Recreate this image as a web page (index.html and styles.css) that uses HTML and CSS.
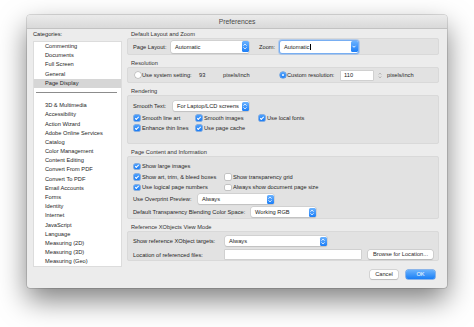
FILE: index.html
```html
<!DOCTYPE html>
<html>
<head>
<meta charset="utf-8">
<link rel="stylesheet" href="styles.css">
</head>
<body>
<div class="window">
  <div class="titlebar">Preferences</div>
  <div class="content">
    <div class="sidebar">
      <div class="cat-label">Categories:</div>
      <ul class="cat-list">
        <li>Commenting</li>
        <li>Documents</li>
        <li>Full Screen</li>
        <li>General</li>
        <li class="selected">Page Display</li>
        <li class="sep"></li>
        <li>3D &amp; Multimedia</li>
        <li>Accessibility</li>
        <li>Action Wizard</li>
        <li>Adobe Online Services</li>
        <li>Catalog</li>
        <li>Color Management</li>
        <li>Content Editing</li>
        <li>Convert From PDF</li>
        <li>Convert To PDF</li>
        <li>Email Accounts</li>
        <li>Forms</li>
        <li>Identity</li>
        <li>Internet</li>
        <li>JavaScript</li>
        <li>Language</li>
        <li>Measuring (2D)</li>
        <li>Measuring (3D)</li>
        <li>Measuring (Geo)</li>
        <li>Multimedia (legacy)</li>
      </ul>
    </div>
    <div class="main">
      <section class="sec">
        <div class="sec-title first">Default Layout and Zoom</div>
        <div class="group g1">
          <span class="lbl w-layout">Page Layout:</span>
          <div class="select w78"><span>Automatic</span><i class="step"><svg viewBox="0 0 6 9" width="6" height="9"><path d="M1.5 3.6 L3 2.1 L4.5 3.6 M1.5 5.4 L3 6.9 L4.5 5.4" fill="none" stroke="#fff" stroke-width="0.9"/></svg></i></div>
          <span class="lbl w-zoom">Zoom:</span>
          <div class="select focus w78"><span>Automatic<b class="caret"></b></span><i class="step"><svg viewBox="0 0 6 9" width="6" height="9"><path d="M1.5 3.8 L3 5.3 L4.5 3.8" fill="none" stroke="#fff" stroke-width="0.9"/></svg></i></div>
        </div>
      </section>
      <section class="sec">
        <div class="sec-title">Resolution</div>
        <div class="group g2">
          <span class="radio"></span>
          <span class="lbl w-sys">Use system setting:</span>
          <span class="lbl w-93">93</span>
          <span class="lbl w-ppi">pixels/inch</span>
          <span class="radio on"></span>
          <span class="lbl w-custom">Custom resolution:</span>
          <div class="field w32">110</div>
          <svg class="mini-step" viewBox="0 0 4 9" width="4" height="9"><path d="M0.8 3.4 L2 2.2 L3.2 3.4 M0.8 5.6 L2 6.8 L3.2 5.6" fill="none" stroke="#8a8a8a" stroke-width="0.6"/></svg>
          <span class="lbl">pixels/inch</span>
        </div>
      </section>
      <section class="sec">
        <div class="sec-title">Rendering</div>
        <div class="group g3">
          <div class="row">
            <span class="lbl w-smooth">Smooth Text:</span>
            <div class="select w76 h10"><span>For Laptop/LCD screens</span><i class="step"><svg viewBox="0 0 6 9" width="6" height="9"><path d="M1.5 3.6 L3 2.1 L4.5 3.6 M1.5 5.4 L3 6.9 L4.5 5.4" fill="none" stroke="#fff" stroke-width="0.9"/></svg></i></div>
          </div>
          <div class="checks c3">
            <label class="chk"><span class="box on"></span>Smooth line art</label>
            <label class="chk"><span class="box on"></span>Smooth images</label>
            <label class="chk"><span class="box on"></span>Use local fonts</label>
            <label class="chk"><span class="box on"></span>Enhance thin lines</label>
            <label class="chk"><span class="box on"></span>Use page cache</label>
          </div>
        </div>
      </section>
      <section class="sec">
        <div class="sec-title">Page Content and Information</div>
        <div class="group g4">
          <div class="checks c2">
            <label class="chk"><span class="box on"></span>Show large images</label>
            <span></span>
            <label class="chk"><span class="box on"></span>Show art, trim, &amp; bleed boxes</label>
            <label class="chk"><span class="box"></span>Show transparency grid</label>
            <label class="chk"><span class="box on"></span>Use logical page numbers</label>
            <label class="chk"><span class="box"></span>Always show document page size</label>
          </div>
          <div class="row r-over">
            <span class="lbl w-over">Use Overprint Preview:</span>
            <div class="select w76 h10"><span>Always</span><i class="step"><svg viewBox="0 0 6 9" width="6" height="9"><path d="M1.5 3.6 L3 2.1 L4.5 3.6 M1.5 5.4 L3 6.9 L4.5 5.4" fill="none" stroke="#fff" stroke-width="0.9"/></svg></i></div>
          </div>
          <div class="row r-blend">
            <span class="lbl w-blend">Default Transparency Blending Color Space:</span>
            <div class="select w65 h10"><span>Working RGB</span><i class="step"><svg viewBox="0 0 6 9" width="6" height="9"><path d="M1.5 3.6 L3 2.1 L4.5 3.6 M1.5 5.4 L3 6.9 L4.5 5.4" fill="none" stroke="#fff" stroke-width="0.9"/></svg></i></div>
          </div>
        </div>
      </section>
      <section class="sec">
        <div class="sec-title">Reference XObjects View Mode</div>
        <div class="group g5">
          <div class="row">
            <span class="lbl w-xref">Show reference XObject targets:</span>
            <div class="select w102 h10"><span>Always</span><i class="step"><svg viewBox="0 0 6 9" width="6" height="9"><path d="M1.5 3.6 L3 2.1 L4.5 3.6 M1.5 5.4 L3 6.9 L4.5 5.4" fill="none" stroke="#fff" stroke-width="0.9"/></svg></i></div>
          </div>
          <div class="row r-loc">
            <span class="lbl w-xref">Location of referenced files:</span>
            <div class="field w136"></div>
            <button class="btn browse">Browse for Location...</button>
          </div>
        </div>
      </section>
      <div class="actions">
        <button class="btn cancel">Cancel</button>
        <button class="btn ok">OK</button>
      </div>
    </div>
  </div>
</div>
</body>
</html>
```
FILE: styles.css
```css
* { box-sizing: border-box; }
html, body { margin: 0; padding: 0; background: #fff; }
body {
  font-family: "Liberation Sans", Arial, sans-serif;
  font-size: 5.7px;
  color: #262626;
  width: 474px;
  height: 327px;
  overflow: hidden;
}
.window {
  margin: 15px 0 0 27px;
  width: 420px;
  height: 273px;
  background: #ececec;
  border-radius: 3px;
  box-shadow: 0 12px 28px rgba(0,0,0,0.5), 0 0 0 0.5px rgba(0,0,0,0.25);
  display: flex;
  flex-direction: column;
  overflow: hidden;
}
.titlebar {
  height: 14px;
  flex: none;
  background: linear-gradient(#ebebeb, #d9d9d9);
  border-bottom: 1px solid #c2c2c2;
  text-align: center;
  line-height: 13px;
  font-size: 6.8px;
  color: #4a4a4a;
}
.content {
  flex: 1;
  display: flex;
  padding: 0 8px 0 6px;
  gap: 5px;
}
.sidebar { width: 89px; flex: none; display: flex; flex-direction: column; }
.cat-label { padding-top: 1px; line-height: 8px; height: 12px; }
.cat-list {
  list-style: none;
  margin: 0;
  padding: 0;
  background: #fff;
  height: 226px;
  overflow: hidden;
  border: 0.5px solid #dcdcdc;
}
.cat-list li {
  height: 9.2px;
  line-height: 9.2px;
  padding-left: 11px;
  white-space: nowrap;
}
.cat-list li.selected { background: #d6d6d6; }
.cat-list li.sep::after {
  content: "";
  display: block;
  margin: 4px 4px 0 -9px;
  height: 1px;
  background: #8c8c8c;
}
.main { flex: 1; display: flex; flex-direction: column; }
.sec-title { padding-top: 5px; line-height: 7px; height: 12px; color: #333; padding-left: 4px; }
.sec-title.first { padding-top: 2px; height: 9px; }
.group {
  background: #e2e2e2;
  border: 0.5px solid #d9d9d9;
  border-radius: 2px;
}
.row { display: flex; align-items: center; }
.lbl { white-space: nowrap; flex: none; }
.g1 { height: 17px; display: flex; align-items: center; padding-left: 5px; }
.w-layout { width: 38px; }
.w-zoom { width: 21px; margin-left: 10px; }
.select {
  position: relative;
  flex: none;
  height: 12px;
  background: #fff;
  border-radius: 2px;
  box-shadow: 0 0 0 0.5px #c4c4c4, 0 0.5px 1px rgba(0,0,0,0.15);
  display: flex;
  align-items: center;
  padding-left: 4px;
  color: #222;
}
.select.h10 { height: 10px; }
.select span { flex: 1; white-space: nowrap; }
.step {
  flex: none;
  width: 7px;
  height: calc(100% - 1px);
  margin-right: 0.5px;
  border-radius: 1.5px;
  background: linear-gradient(#6cb3ff, #1c7ef7);
  display: flex;
  align-items: center;
  justify-content: center;
}
.step svg { display: block; }
.select.focus { box-shadow: 0 0 0 1px #78aef2, 0 0 0 2px rgba(120,174,242,0.45); }
.caret { display: inline-block; width: 0.5px; height: 6px; background: #000; vertical-align: -1px; margin-left: 0.5px; }
.w78 { width: 78px; }
.w76 { width: 76px; }
.w65 { width: 65px; }
.w102 { width: 102px; }

.g2 { height: 16px; display: flex; align-items: center; padding-left: 7px; }
.radio {
  flex: none;
  width: 6px; height: 6px;
  border-radius: 50%;
  background: #fff;
  box-shadow: 0 0 0 0.5px #a8a8a8;
  margin-right: 1px;
  display: flex; align-items: center; justify-content: center;
}
.radio.on { background: linear-gradient(#55a4fb, #1f7ff5); box-shadow: 0 0 0 0.5px #2f7fe0; }
.radio.on::after { content: ""; width: 2.2px; height: 2.2px; border-radius: 50%; background: #fff; }
.w-sys { width: 57px; }
.w-93 { width: 24px; }
.w-ppi { width: 57px; }
.w-custom { width: 54px; }
.field {
  flex: none;
  height: 9px;
  background: #fff;
  box-shadow: 0 0 0 0.5px #bdbdbd;
  line-height: 9px;
  padding-left: 3px;
  color: #222;
}
.w32 { width: 32px; }
.w136 { width: 136px; }
.mini-step { flex: none; margin: 0 5px 0 5px; display: block; }

.g3 { height: 49px; padding: 5px 0 0 5px; }
.w-smooth { width: 40px; }
.checks { display: grid; grid-auto-rows: 10px; align-items: center; margin-top: 2px; padding-left: 1px; }
.c3 { grid-template-columns: 62px 63px 60px; }
.c2 { grid-template-columns: 91px 120px; grid-auto-rows: 10.5px; margin-top: 0; }
.chk { display: flex; align-items: center; white-space: nowrap; }
.box {
  flex: none;
  width: 5.5px; height: 5.5px;
  border-radius: 1px;
  background: #fff;
  box-shadow: 0 0 0 0.5px #a3a3a3;
  margin-right: 2.5px;
  position: relative;
}
.box.on { background: linear-gradient(#4ea0fb, #1d7df4); box-shadow: 0 0 0 0.5px #2b7ae0; }
.box.on::after {
  content: "";
  position: absolute;
  left: 1.8px; top: 0.6px;
  width: 1.3px; height: 2.8px;
  border: solid #fff;
  border-width: 0 0.8px 0.8px 0;
  transform: rotate(45deg);
}

.g4 { height: 63px; padding: 4px 0 0 5px; }
.r-over { margin-top: 1.5px; }
.r-blend { margin-top: 3px; }
.w-over { width: 65px; }
.w-blend { width: 118px; }

.g5 { height: 30px; padding: 4px 0 0 5px; }
.w-xref { width: 92px; }
.r-loc { margin-top: 4px; }
.btn {
  font-family: inherit;
  font-size: 5.7px;
  height: 9px;
  padding: 0;
  border: none;
  border-radius: 2px;
  background: #fff;
  box-shadow: 0 0 0 0.5px #bdbdbd, 0 0.5px 0.8px rgba(0,0,0,0.2);
  color: #2b2b2b;
  line-height: 9px;
}
.browse { width: 65px; margin-left: 7px; }
.actions { display: flex; justify-content: flex-end; gap: 8px; margin-top: 9px; padding-right: 4px; }
.cancel { width: 28px; height: 8.5px; }
.ok { width: 29px; height: 9px; background: linear-gradient(#69b2fd, #1a7ff6); color: #fff; box-shadow: 0 0 0 0.5px #2d7fe6; }
```
